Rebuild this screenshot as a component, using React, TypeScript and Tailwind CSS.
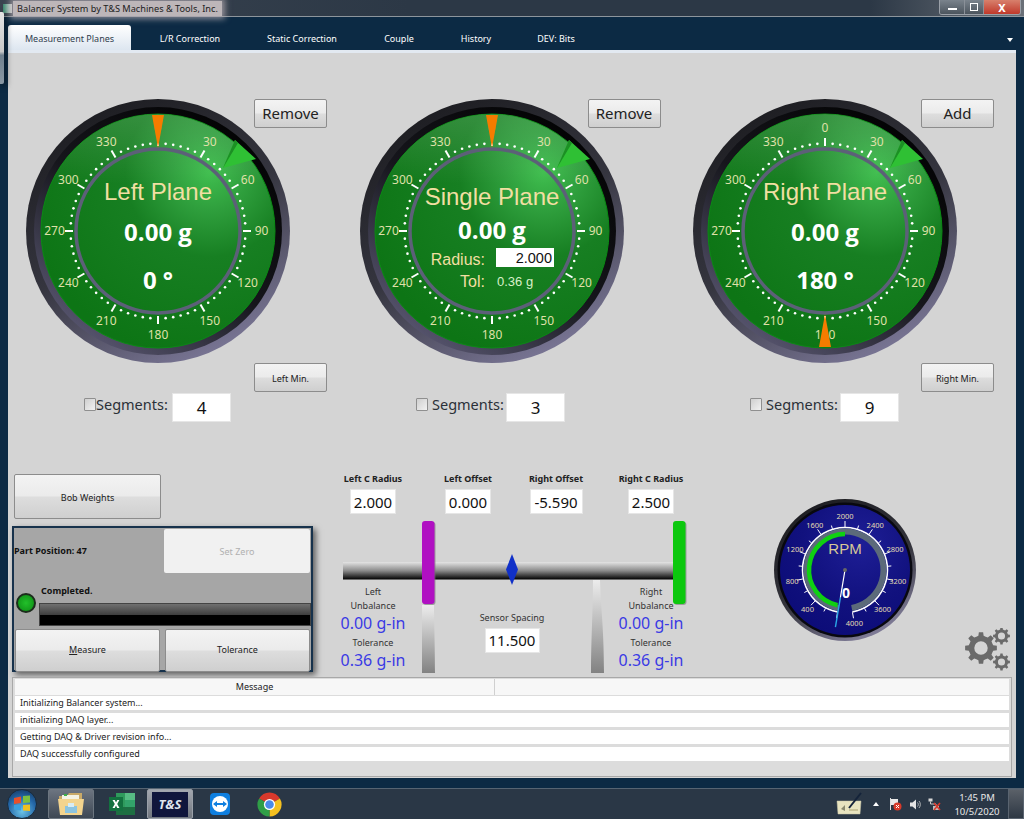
import type { ReactNode } from 'react'

const btn =
  'flex items-center justify-center rounded-[2px] border border-[#8c8c8c] bg-[linear-gradient(#f3f3f3_0%,#ebebeb_48%,#dddddd_52%,#cfcfcf_100%)] text-[#222]'
const field = 'flex items-center justify-center border border-[#e6e6e6] bg-white text-[#111]'
const stackItem = 'col-start-1 row-start-1'

function polar(r: number, deg: number) {
  const rad = ((deg - 90) * Math.PI) / 180
  return { x: r * Math.cos(rad), y: r * Math.sin(rad) }
}

function gearPath(cx: number, cy: number, r: number, teeth: number, hole: number) {
  const step = 360 / teeth
  const pts: string[] = []
  for (let i = 0; i < teeth; i++) {
    const a = i * step
    const list: [number, number][] = [
      [r * 0.76, a - step * 0.5],
      [r * 0.78, a - step * 0.27],
      [r, a - step * 0.17],
      [r, a + step * 0.17],
      [r * 0.78, a + step * 0.27],
    ]
    list.forEach(([pr, pa]) => {
      const p = polar(pr, pa)
      pts.push(`${(cx + p.x).toFixed(2)} ${(cy + p.y).toFixed(2)}`)
    })
  }
  const h = r * hole
  return `M${pts.join('L')}Z M${cx - h} ${cy}a${h} ${h} 0 1 0 ${h * 2} 0a${h} ${h} 0 1 0 ${-h * 2} 0Z`
}

function Gauge({ id, needle, children }: { id: string; needle: number; children: ReactNode }) {
  const marks = []
  for (let a = 0; a < 360; a += 5) {
    if (a % 30 === 0) {
      const p1 = polar(85, a)
      const p2 = polar(93, a)
      const t = polar(103.5, a)
      marks.push(
        <g key={a}>
          <line x1={p1.x} y1={p1.y} x2={p2.x} y2={p2.y} stroke="#fff" strokeWidth="2" />
          <text
            x={t.x}
            y={t.y}
            dy=".36em"
            textAnchor="middle"
            fontSize="12"
            fill="#dfe0a8"
            className="font-['Noto_Sans',sans-serif]"
          >
            {a}
          </text>
        </g>,
      )
    } else {
      const p = polar(87.5, a)
      marks.push(<circle key={a} cx={p.x} cy={p.y} r="1.3" fill="#fff" />)
    }
  }

  return (
    <svg viewBox="-132 -132 264 264" className="block h-[264px] w-[264px]">
      <defs>
        <linearGradient id={`${id}-rim`} x1="0.25" y1="0" x2="0.75" y2="1">
          <stop offset="0" stopColor="#1c1c20" />
          <stop offset="0.5" stopColor="#35353f" />
          <stop offset="1" stopColor="#7f7b9c" />
        </linearGradient>
        <linearGradient id={`${id}-in`} x1="0.9" y1="0.05" x2="0.25" y2="0.95">
          <stop offset="0" stopColor="#000" />
          <stop offset="0.55" stopColor="#16161c" />
          <stop offset="1" stopColor="#55536c" />
        </linearGradient>
        <radialGradient id={`${id}-face`} cx="0.72" cy="0.25" r="0.8">
          <stop offset="0" stopColor="#3fbe4e" />
          <stop offset="0.2" stopColor="#2f9f3d" />
          <stop offset="0.45" stopColor="#177f22" />
          <stop offset="1" stopColor="#0d7515" />
        </radialGradient>
        <linearGradient id={`${id}-sheen`} x1="0" y1="0" x2="0" y2="1">
          <stop offset="0" stopColor="#fff" stopOpacity="0.13" />
          <stop offset="0.3" stopColor="#fff" stopOpacity="0" />
        </linearGradient>
      </defs>
      <circle r="132" fill={`url(#${id}-rim)`} />
      <circle r="124" fill={`url(#${id}-in)`} />
      <circle r="117" fill={`url(#${id}-face)`} stroke="#0a8a14" strokeWidth="1" />
      <circle r="117" fill={`url(#${id}-sheen)`} />
      {marks}
      <polygon points="77,-91 98,-72 65,-63" fill="#2fc034" />
      <polygon points="77,-91 80,-88 65,-63" fill="#1c8f24" />
      <circle r="82" fill="none" stroke="#5c6078" strokeWidth="3.5" />
      <polygon points="-6,-116 6,-116 0,-83" fill="#f57c00" transform={`rotate(${needle})`} />
      {children}
    </svg>
  )
}

function PlaneColumn({
  id,
  needle,
  action,
  minLabel,
  segments,
  rowClass,
  children,
}: {
  id: string
  needle: number
  action: string
  minLabel?: string
  segments: string
  rowClass: string
  children: ReactNode
}) {
  return (
    <div className="w-[333.5px] shrink-0">
      <div className="grid h-[293px] w-[310px]">
        <div className={`${stackItem} ml-[8px]`}>
          <Gauge id={id} needle={needle}>
            {children}
          </Gauge>
        </div>
        <div className={`${btn} ${stackItem} mr-[1px] h-[29px] w-[73px] self-start justify-self-end text-[15px]`}>
          {action}
        </div>
        {minLabel && (
          <div
            className={`${btn} ${stackItem} mr-[1px] h-[29px] w-[73px] self-end justify-self-end pt-[2px] text-[9px]`}
          >
            {minLabel}
          </div>
        )}
      </div>
      <div className={`mt-[1px] flex h-[29px] items-center ${rowClass}`}>
        <span className="mb-[7px] h-[13px] w-[12px] rounded-[1px] border border-[#8f8f8f] bg-[linear-gradient(135deg,#cfcfcf,#f2f2f2)]" />
        <span className="seg-label mb-[7px] text-[14.5px] leading-none text-[#2b3038]">Segments:</span>
        <div className={`${field} h-[29px] w-[59px] text-[17px]`}>{segments}</div>
      </div>
    </div>
  )
}

function TopField({ label, value, className, w }: { label: string; value: string; className: string; w: string }) {
  return (
    <div className={`flex w-[66px] flex-col items-center ${className}`}>
      <span className="whitespace-nowrap text-[9px] font-bold leading-[10px] text-[#222]">{label}</span>
      <div className={`${field} mt-[5px] h-[25px] pt-px text-[15px] ${w}`}>{value}</div>
    </div>
  )
}

function SideValues({ name, className }: { name: string; className: string }) {
  return (
    <div className={`flex w-[66px] flex-col items-center pt-[64px] text-[#333] ${className}`}>
      <span className="h-[14px] text-[9px] leading-[14px]">{name}</span>
      <span className="h-[14px] text-[9px] leading-[14px]">Unbalance</span>
      <span className="h-[20px] whitespace-nowrap text-[16px] leading-[20px] text-[#3a3ae4]">0.00 g-in</span>
      <span className="h-[20px] text-[9px] leading-[20px]">Tolerance</span>
      <span className="h-[14px] whitespace-nowrap text-[16px] leading-[14px] text-[#3a3ae4]">0.36 g-in</span>
    </div>
  )
}

function ShaftDrawing() {
  return (
    <svg viewBox="340 521 350 152" className={`${stackItem} block h-[152px] w-[350px]`}>
      <defs>
        <linearGradient id="shaft" x1="0" y1="0" x2="0" y2="1">
          <stop offset="0" stopColor="#e4e4e4" />
          <stop offset="0.5" stopColor="#8a8a8a" />
          <stop offset="1" stopColor="#000" />
        </linearGradient>
        <linearGradient id="post" x1="0" y1="0" x2="0" y2="1">
          <stop offset="0" stopColor="#ececec" />
          <stop offset="1" stopColor="#828282" />
        </linearGradient>
      </defs>
      <rect x="343" y="562" width="331" height="17.5" fill="url(#shaft)" />
      <path d="M422 605H434C434 625 435 640 435 673H422Z" fill="url(#post)" />
      <path d="M593 580H600C601 610 604 630 604 673H591C591 640 593 610 593 580Z" fill="url(#post)" />
      <rect x="423" y="522" width="12.5" height="83" rx="3" fill="#777" opacity="0.6" />
      <rect x="422" y="521" width="12.5" height="83" rx="3" fill="#b010c2" />
      <rect x="674" y="522" width="12.5" height="83" rx="3" fill="#777" opacity="0.6" />
      <rect x="673" y="521" width="12.5" height="83" rx="3" fill="#0cc80e" />
      <polygon points="512,554 518,569.5 512,585 506,569.5" fill="#1030c8" />
    </svg>
  )
}

function RpmGauge() {
  const labels = ['400', '800', '1200', '1600', '2000', '2400', '2800', '3200', '3600']
  const arc = (r: number, from: number, to: number) => {
    const a = polar(r, from)
    const b = polar(r, to)
    const large = Math.abs(to - from) > 180 ? 1 : 0
    return `M${a.x} ${a.y}A${r} ${r} 0 ${large} 1 ${b.x} ${b.y}`
  }
  const ticks = []
  for (let i = -10; i <= 10; i++) {
    const a = i * 17
    const p1 = polar(43, a)
    const p2 = polar(i % 2 === 0 ? 49 : 46.5, a)
    ticks.push(<line key={i} x1={p1.x} y1={p1.y} x2={p2.x} y2={p2.y} stroke="#fff" strokeWidth="1" />)
  }
  const tip = polar(58, 189.5)
  const mid = polar(28, 189.5)
  const end4000 = polar(54, 170)
  return (
    <svg viewBox="-71 -71 142 142" className="block h-[142px] w-[142px]">
      <defs>
        <linearGradient id="rpm-rim" x1="0.25" y1="0" x2="0.75" y2="1">
          <stop offset="0" stopColor="#1c1c20" />
          <stop offset="0.55" stopColor="#34343c" />
          <stop offset="1" stopColor="#8a86a4" />
        </linearGradient>
        <radialGradient id="rpm-face" cx="0.62" cy="0.3" r="0.75">
          <stop offset="0" stopColor="#1e1e96" />
          <stop offset="0.6" stopColor="#11117e" />
          <stop offset="1" stopColor="#0c0c78" />
        </radialGradient>
      </defs>
      <circle r="71" fill="url(#rpm-rim)" />
      <circle r="67.5" fill="#08080f" />
      <circle r="65" fill="url(#rpm-face)" />
      {ticks}
      <path d={arc(42.5, -170, 170)} fill="none" stroke="#fff" strokeWidth="1.6" />
      <path d={arc(38.5, -170, 170)} fill="none" stroke="#5c6a7a" strokeWidth="6" />
      <path d={arc(36, -168, 0)} fill="none" stroke="#0fd012" strokeWidth="4.5" />
      {labels.map((l, i) => {
        const p = polar(54, -136 + i * 34)
        return (
          <text
            key={l}
            x={p.x}
            y={p.y}
            dy=".36em"
            textAnchor="middle"
            fontSize="7.5"
            fill="#e4dcb4"
            className="font-['Noto_Sans',sans-serif]"
          >
            {l}
          </text>
        )
      })}
      <text
        x={end4000.x}
        y={end4000.y}
        dy=".36em"
        textAnchor="middle"
        fontSize="7.5"
        fill="#e4dcb4"
        className="font-['Noto_Sans',sans-serif]"
      >
        4000
      </text>
      <text
        y="-21"
        dy=".36em"
        textAnchor="middle"
        fontSize="15"
        fill="#d8c898"
        className="font-['Liberation_Sans',sans-serif]"
      >
        RPM
      </text>
      <line x1="0" y1="0" x2={mid.x} y2={mid.y} stroke="#fff" strokeWidth="1.2" />
      <line x1={mid.x} y1={mid.y} x2={tip.x} y2={tip.y} stroke="#2aa8e8" strokeWidth="1.4" />
      <circle r="2" fill="#666" />
      <text
        x="1"
        y="23"
        dy=".36em"
        textAnchor="middle"
        fontSize="14"
        fontWeight="700"
        fill="#fff"
        className="font-['Noto_Sans',sans-serif]"
      >
        0
      </text>
    </svg>
  )
}

function Gears() {
  return (
    <svg viewBox="966 628 46 43" className="block h-[43px] w-[46px]">
      <path fillRule="evenodd" fill="#6a6a6a" d={gearPath(982, 648, 16, 8, 0.42)} />
      <path fillRule="evenodd" fill="#6a6a6a" d={gearPath(1002.5, 636, 8.5, 8, 0.42)} />
      <path fillRule="evenodd" fill="#6a6a6a" d={gearPath(1002.5, 662, 8.5, 8, 0.42)} />
    </svg>
  )
}

function StartOrb() {
  return (
    <svg viewBox="-15 -15 30 30" className="h-[30px] w-[30px]">
      <defs>
        <radialGradient id="orb" cx="0.5" cy="0.75" r="0.8">
          <stop offset="0" stopColor="#6cc4e8" />
          <stop offset="0.6" stopColor="#2467a8" />
          <stop offset="1" stopColor="#153a64" />
        </radialGradient>
      </defs>
      <circle r="14.5" fill="url(#orb)" stroke="#1a2a3a" />
      <path d="M-8 -6L-1 -7.5V-1L-8 0Z" fill="#e8502a" />
      <path d="M1 -8L8 -8.5V-1.5L1 -1Z" fill="#7cc040" />
      <path d="M-8 1L-1 0.5V6.5L-8 5.5Z" fill="#3aa0e0" />
      <path d="M1 1L8 0.5V7L1 6.5Z" fill="#f0c020" />
    </svg>
  )
}

function FolderIcon() {
  return (
    <svg viewBox="0 0 28 26" className="h-[26px] w-[28px]">
      <path d="M2 5H10L12 2H25V12H2Z" fill="#c9a968" />
      <rect x="5" y="4" width="17" height="8" fill="#f4f2e4" />
      <rect x="7" y="3" width="3" height="2" fill="#3cae48" />
      <path d="M1 8H27L25 24H3Z" fill="#f3d48e" />
      <rect x="8" y="15" width="12" height="7" fill="#8cc4e0" />
      <rect x="11" y="12" width="6" height="4" fill="#d8ecf4" />
    </svg>
  )
}

function ExcelIcon() {
  return (
    <svg viewBox="0 0 28 24" className="h-[24px] w-[28px]">
      <rect x="8" y="1" width="19" height="22" fill="#2f9a5c" />
      <rect x="17" y="1" width="10" height="7" fill="#57bb83" />
      <rect x="17" y="8" width="10" height="7" fill="#33a36a" />
      <rect x="8" y="15" width="19" height="8" fill="#1d6f42" />
      <rect x="1" y="5" width="14" height="14" fill="#13713f" />
      <path d="M4.5 8H6.8L8 10.4L9.3 8H11.4L9.2 12L11.5 16H9.2L8 13.6L6.7 16H4.5L6.8 12Z" fill="#fff" />
    </svg>
  )
}

function TeamViewerIcon() {
  return (
    <svg viewBox="0 0 22 24" className="h-[24px] w-[22px]">
      <rect x="1" y="1" width="20" height="22" rx="4" fill="#0e7fe0" />
      <circle cx="11" cy="12" r="8" fill="#fff" />
      <path d="M4 12L8 9V11H14V9L18 12L14 15V13H8V15Z" fill="#0e7fe0" />
    </svg>
  )
}

function ChromeIcon() {
  return (
    <svg viewBox="-12.5 -12.5 25 25" className="h-[25px] w-[25px]">
      <path d="M0 0L-10.4 -6A12 12 0 0 1 10.4 -6Z" fill="#d8392c" />
      <path d="M0 0L10.4 -6A12 12 0 0 1 0 12Z" fill="#f4c020" />
      <path d="M0 0L0 12A12 12 0 0 1 -10.4 -6Z" fill="#2f9e47" />
      <circle r="5.6" fill="#fff" />
      <circle r="4.3" fill="#4a8ae8" />
    </svg>
  )
}

function TrayPad() {
  return (
    <svg viewBox="0 0 28 24" className="h-[24px] w-[28px]">
      <path d="M2 9H26L25 22H3Z" fill="#e8e4c0" stroke="#c8c4a8" strokeWidth="0.5" />
      <path d="M6 17L10 13L10 19Z" fill="#8a8a70" />
      <path d="M14 18H23" stroke="#a8a070" strokeWidth="1" />
      <path d="M14 16L26 1" stroke="#14233a" strokeWidth="2" />
    </svg>
  )
}

function TrayFlag() {
  return (
    <svg viewBox="0 0 13 13" className="h-[13px] w-[13px]">
      <path d="M1.5 0V12" stroke="#ddd" strokeWidth="1" />
      <path d="M2 1H9V7H2Z" fill="#e8e8e8" />
      <circle cx="8.5" cy="8.5" r="4" fill="#d83a2a" />
      <path d="M7 7L10 10M10 7L7 10" stroke="#fff" strokeWidth="1" />
    </svg>
  )
}

function TraySpeaker() {
  return (
    <svg viewBox="0 0 13 13" className="h-[13px] w-[13px]">
      <path d="M1 4.5H3.5L7 1.5V11.5L3.5 8.5H1Z" fill="#e4e4e4" />
      <path d="M8.5 4.5C9.5 5.5 9.5 7.5 8.5 8.5M10 3C11.8 5 11.8 8 10 10" fill="none" stroke="#d0d0d0" strokeWidth="0.8" />
    </svg>
  )
}

function TrayNetwork() {
  return (
    <svg viewBox="0 0 13 13" className="h-[13px] w-[13px]">
      <rect x="0.5" y="0.5" width="4" height="3" fill="#d8d8d8" />
      <path d="M2.5 3.5V6H8V9" stroke="#c8c8c8" strokeWidth="1" fill="none" />
      <rect x="5" y="8" width="6" height="4" fill="#bcbcbc" />
      <path d="M6 5L12 12M12 5L6 12" stroke="#d8392c" strokeWidth="1.6" />
    </svg>
  )
}

export default function App() {
  const serif = "font-['Liberation_Sans',sans-serif]"
  const bold = "font-['Open_Sans',sans-serif]"
  return (
    <div className="relative flex h-[819px] w-[1024px] flex-col overflow-hidden bg-[#0c2a44] font-['Noto_Sans',sans-serif]">
      {/* Title bar */}
      <div className="flex h-[17px] shrink-0 items-center border-b border-[#8d959c] bg-[linear-gradient(90deg,#3a4450,#2c3846_40%,#2c3846_85%,#6a7078)]">
        <span className="ml-[3px] h-[9px] w-[9px] bg-[linear-gradient(90deg,#3a8a70,#d8d8d8)]" />
        <span className="ml-[1px] whitespace-nowrap bg-[#bdb6b9] px-[4px] text-[9.2px] leading-[15px] text-[#1c1c1c] shadow-[0_0_6px_3px_rgba(190,180,185,0.7)]">
          Balancer System by T&amp;S Machines &amp; Tools, Inc.
        </span>
        <div className="ml-auto mr-[3px] flex h-[15px] w-[82px] self-start overflow-hidden rounded-b-[3px] border border-t-0 border-[#9aa0a8]">
          <div className="flex w-[24px] items-center justify-center bg-[linear-gradient(#7a838c,#4c555e)]">
            <span className="mt-[4px] h-[2px] w-[9px] bg-white" />
          </div>
          <div className="flex w-[20px] items-center justify-center border-x border-[#8a9098] bg-[linear-gradient(#7a838c,#4c555e)]">
            <span className="h-[8px] w-[8px] border-[1.5px] border-white" />
          </div>
          <div className="flex flex-1 items-center justify-center bg-[linear-gradient(#d8806c,#c0392b)] text-[11px] font-bold leading-none text-white">
            X
          </div>
        </div>
      </div>

      {/* Window behind, peeking in at the left edge */}
      <div className="absolute left-0 top-[12px] z-10 h-[72px] w-[4px] rounded-r-[2px] bg-[linear-gradient(#e4e4e4_0%,#c8c8c8_55%,#70808e_60%,#8a98a4_100%)] shadow-[2px_2px_6px_rgba(0,0,0,0.6)]" />

      {/* Tabs */}
      <div className="flex h-[33px] shrink-0 items-end pl-[8px] text-center text-[9px] text-white">
        <div className="flex h-[25px] w-[123px] items-center justify-center rounded-t-[3px] bg-[linear-gradient(#ffffff,#dde6f0)] pt-[3px] text-[#30404e]">
          Measurement Planes
        </div>
        <div className="flex h-[25px] w-[118px] items-center justify-center pt-[3px]">L/R Correction</div>
        <div className="flex h-[25px] w-[106px] items-center justify-center pt-[3px]">Static Correction</div>
        <div className="flex h-[25px] w-[88px] items-center justify-center pt-[3px]">Couple</div>
        <div className="flex h-[25px] w-[66px] items-center justify-center pt-[3px]">History</div>
        <div className="flex h-[25px] w-[94px] items-center justify-center pt-[3px]">DEV: Bits</div>
        <div className="mb-[8px] ml-auto mr-[11px] h-0 w-0 border-x-[3px] border-t-[4px] border-x-transparent border-t-white" />
      </div>

      {/* Main panel */}
      <div className="mx-[8px] flex h-[728px] shrink-0 flex-col border-t-[3px] border-[#e2e9f1] bg-[#d4d4d4] pt-[46px]">
        {/* Planes */}
        <div className="flex pl-[10px]">
          <PlaneColumn
            id="left"
            needle={0}
            action="Remove"
            minLabel="Left Min."
            segments="4"
            rowClass="pl-[66px] [&>.seg-label]:w-[76px]"
          >
            <text x="0" y="-31" textAnchor="middle" fontSize="24" fill="#f1dfa2" className={serif}>
              Left Plane
            </text>
            <text x="0" y="10" textAnchor="middle" fontSize="24" fontWeight="700" fill="#fff" className={bold}>
              0.00 g
            </text>
            <text x="0" y="58" textAnchor="middle" fontSize="24" fontWeight="700" fill="#fff" className={bold}>
              0 °
            </text>
          </PlaneColumn>
          <PlaneColumn
            id="single"
            needle={0}
            action="Remove"
            minLabel={undefined}
            segments="3"
            rowClass="pl-[64.5px] [&>.seg-label]:ml-[4px] [&>.seg-label]:w-[74px]"
          >
            <text x="0" y="-26" textAnchor="middle" fontSize="24" fill="#f1dfa2" className={serif}>
              Single Plane
            </text>
            <text x="0" y="8" textAnchor="middle" fontSize="24" fontWeight="700" fill="#fff" className={bold}>
              0.00 g
            </text>
            <text x="-7" y="34" textAnchor="end" fontSize="16" fill="#f1dfa2" className={serif}>
              Radius:
            </text>
            <rect x="4" y="17" width="58" height="19" fill="#fff" />
            <text x="60" y="32" textAnchor="end" fontSize="14.5" fill="#111" className={serif}>
              2.000
            </text>
            <text x="-7" y="56" textAnchor="end" fontSize="16" fill="#f1dfa2" className={serif}>
              Tol:
            </text>
            <text x="5" y="55" fontSize="13" fill="#d8f0c8" className={serif}>
              0.36 g
            </text>
          </PlaneColumn>
          <PlaneColumn
            id="right"
            needle={180}
            action="Add"
            minLabel="Right Min."
            segments="9"
            rowClass="pl-[65px] [&>.seg-label]:ml-[4px] [&>.seg-label]:w-[74px]"
          >
            <text x="0" y="-31" textAnchor="middle" fontSize="24" fill="#f1dfa2" className={serif}>
              Right Plane
            </text>
            <text x="0" y="10" textAnchor="middle" fontSize="24" fontWeight="700" fill="#fff" className={bold}>
              0.00 g
            </text>
            <text x="0" y="58" textAnchor="middle" fontSize="24" fontWeight="700" fill="#fff" className={bold}>
              180 °
            </text>
          </PlaneColumn>
        </div>

        {/* Lower section */}
        <div className="mt-[52px] flex h-[198px] pl-[4px]">
          <div className="w-[301px] shrink-0">
            <div className={`${btn} ml-[2px] h-[45px] w-[147px] pt-[2px] text-[9px]`}>Bob Weights</div>
            <div className="mt-[7px] h-[146px] border-2 border-[#17324c] bg-[#a6a6a6] shadow-[3px_3px_6px_rgba(0,0,0,0.55)]">
              <div className="flex h-[45px] items-center justify-between pr-px">
                <span className="text-[9px] font-bold text-[#111]">Part Position: 47</span>
                <div className="flex h-[44px] w-[146px] items-center justify-center rounded-[2px] bg-[#f1f1f1] pt-[2px] text-[9px] text-[#b0b0b0]">
                  Set Zero
                </div>
              </div>
              <div className="flex h-[53px] items-end">
                <span className="mb-[13px] ml-[2px] h-[20px] w-[20px] shrink-0 rounded-full border-2 border-[#1c2c1c] bg-[radial-gradient(#22c02a,#0c8a14)]" />
                <div className="ml-[3px] flex-1">
                  <div className="pl-[2px] text-[9px] font-bold leading-[12px] text-[#111]">Completed.</div>
                  <div className="mt-[6px] h-[23px] border border-[#444] bg-[linear-gradient(#707070_0%,#404040_50%,#000000_50%,#000000_100%)]" />
                </div>
              </div>
              <div className="mt-[3px] flex justify-between pl-[1px] pr-px">
                <div className={`${btn} h-[43px] w-[145px] pb-[2px] text-[9px]`}>
                  <span>
                    <span className="underline">M</span>easure
                  </span>
                </div>
                <div className={`${btn} h-[43px] w-[145px] pb-[2px] text-[9px]`}>Tolerance</div>
              </div>
            </div>
          </div>

          {/* Shaft */}
          <div className="ml-[27px] w-[350px] shrink-0">
            <div className="flex">
              <TopField label="Left C Radius" value="2.000" className="" w="w-[46px]" />
              <TopField label="Left Offset" value="0.000" className="ml-[29px]" w="w-[46px]" />
              <TopField label="Right Offset" value="-5.590" className="ml-[22px]" w="w-[53px]" />
              <TopField label="Right C Radius" value="2.500" className="ml-[29px]" w="w-[46px]" />
            </div>
            <div className="mt-[7px] grid h-[152px]">
              <ShaftDrawing />
              <div className={`${stackItem} flex`}>
                <SideValues name="Left" className="" />
                <div className="ml-[73px] flex w-[66px] flex-col items-center pt-[90px]">
                  <span className="h-[14px] whitespace-nowrap text-[9px] leading-[14px] text-[#333]">
                    Sensor Spacing
                  </span>
                  <div className={`${field} mt-[3px] h-[25px] w-[55px] text-[15px]`}>11.500</div>
                </div>
                <SideValues name="Right" className="ml-[73px]" />
              </div>
            </div>
          </div>

          {/* RPM */}
          <div className="ml-[84px] mt-[25px] shrink-0">
            <RpmGauge />
          </div>
          <div className="ml-[49px] mt-[154px] shrink-0">
            <Gears />
          </div>
        </div>

        {/* Message log */}
        <div className="ml-[4px] mt-[5px] flex h-[100px] w-[1000px] flex-col border border-[#a8a8a8] bg-[#dcdcdc] px-[2px] pt-px text-[9px] text-[#222]">
          <div className="flex h-[16px] bg-[#f7f7f7]">
            <div className="flex w-[480px] items-center justify-center border-r border-[#d0d0d0]">Message</div>
          </div>
          <div className="mt-[1px] flex h-[14px] items-center bg-white pl-[5px]">Initializing Balancer system...</div>
          <div className="mt-[3px] flex h-[14px] items-center bg-white pl-[5px]">initializing DAQ layer...</div>
          <div className="mt-[3px] flex h-[14px] items-center bg-white pl-[5px]">Getting DAQ &amp; Driver revision info...</div>
          <div className="mt-[3px] flex h-[14px] items-center bg-white pl-[5px]">DAQ successfully configured</div>
        </div>
      </div>

      {/* Taskbar */}
      <div className="mt-[10px] flex h-[31px] shrink-0 items-center border-t border-[#566472] bg-[#2a3746] text-white">
        <div className="ml-[7px] flex w-[30px] justify-center">
          <StartOrb />
        </div>
        <div className="ml-[11px] flex h-[30px] w-[46px] items-center justify-center rounded-[2px] border border-[#6c7680] bg-[linear-gradient(#6c7480,#3e4854)]">
          <FolderIcon />
        </div>
        <div className="ml-[14px] flex w-[28px] justify-center">
          <ExcelIcon />
        </div>
        <div className="ml-[11px] flex h-[30px] w-[46px] items-center justify-center rounded-[2px] border border-[#9aa0a8] bg-[linear-gradient(#a4a8b0,#70767e)]">
          <div className="flex h-[25px] w-[36px] items-center justify-center bg-[#10163c] text-[13px] font-bold italic leading-none text-[#dfe4ee]">
            T&amp;S
          </div>
        </div>
        <div className="ml-[16px] flex w-[22px] justify-center">
          <TeamViewerIcon />
        </div>
        <div className="ml-[26px] flex w-[25px] justify-center">
          <ChromeIcon />
        </div>
        <div className="ml-auto flex items-center">
          <TrayPad />
          <div className="ml-[10px] h-0 w-0 border-x-[3px] border-b-[4px] border-x-transparent border-b-white" />
          <div className="ml-[10px]">
            <TrayFlag />
          </div>
          <div className="ml-[7px]">
            <TraySpeaker />
          </div>
          <div className="ml-[6px]">
            <TrayNetwork />
          </div>
          <div className="ml-[8px] flex w-[56px] flex-col items-center pt-[2px] text-[9.5px] leading-[14px] text-[#e8e8e8]">
            <span>1:45 PM</span>
            <span>10/5/2020</span>
          </div>
          <div className="ml-[3px] h-[30px] w-[16px] border border-[#5a6470] bg-[linear-gradient(#5a6068,#2e3844)]" />
        </div>
      </div>
    </div>
  )
}
